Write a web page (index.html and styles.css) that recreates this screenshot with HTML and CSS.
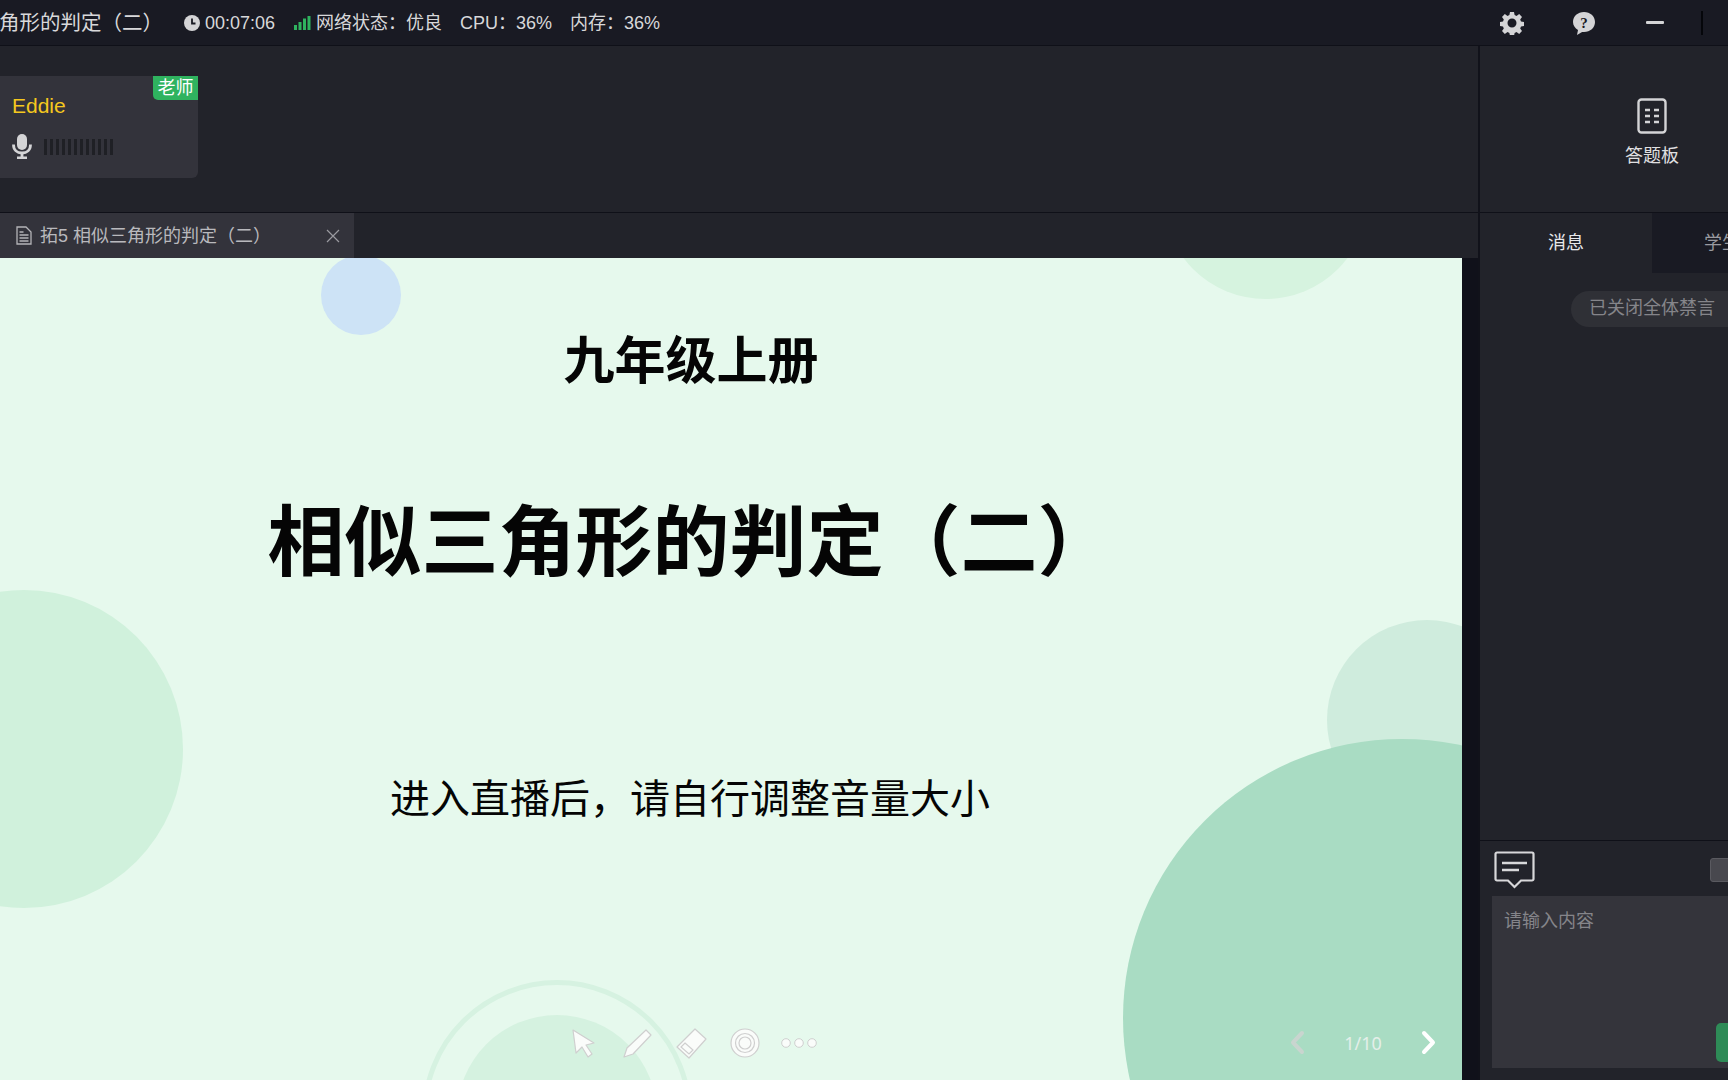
FILE: index.html
```html
<!DOCTYPE html>
<html lang="zh-CN">
<head>
    <meta charset="UTF-8">
    <title>相似三角形的判定（二）</title>
    <link rel="stylesheet" href="styles.css">
</head>
<body>
    <header class="topbar">
        <span class="lesson-title">角形的判定（二）</span>
        <span class="status status-time">
            <svg class="clock" viewBox="0 0 16 16"><circle cx="8" cy="8" r="8" fill="#d4d4d6"/><path d="M8 3.500V8.500H11.500" fill="none" stroke="#191a23" stroke-width="1.800"/></svg>
            00:07:06
        </span>
        <span class="status status-net">
            <svg class="signal" viewBox="0 0 17 14"><path d="M0 9h3v5H0zM4.500 6h3v8h-3zM9 2.500h3V14H9zM13.500 0h3v14h-3z" fill="#2fb35f"/></svg>
            网络状态：优良
        </span>
        <span class="status status-cpu">CPU：36%</span>
        <span class="status status-mem">内存：36%</span>
        <div class="window-tools">
            <svg class="tool-icon" viewBox="0 0 24 24"><path fill="#d4d4d6" fill-rule="evenodd" d="M10 1h4l.6 3.100 1.900.8 2.700-1.800 2.800 2.800-1.800 2.700.8 1.900 3 .5v4l-3 .6-.8 1.900 1.800 2.600-2.800 2.800-2.700-1.800-1.900.8-.6 3.100h-4l-.6-3.100-1.900-.8-2.700 1.800-2.800-2.800 1.800-2.600-.8-1.900-3-.6v-4l3-.5.8-1.900-1.800-2.700 2.800-2.800 2.700 1.800 1.900-.8zM12 7.500a4.500 4.500 0 1 0 0 9 4.500 4.500 0 0 0 0-9z"/></svg>
            <svg class="tool-icon" viewBox="0 0 24 24"><path fill="#d4d4d6" d="M12 1c6.200 0 11 4.300 11 10s-4.800 10-11 10c-.7 0-1.300 0-1.900-.1L5 24l1-5C3 17.200 1 14.300 1 11 1 5.300 5.800 1 12 1z"/><text x="12" y="16.500" class="help-mark">?</text></svg>
            <span class="minimize"></span>
            <span class="tool-sep"></span>
        </div>
    </header>

    <div class="workspace">
        <main class="left-col">
            <section class="video-strip">
                <div class="user-card">
                    <span class="role-badge">老师</span>
                    <div class="user-name">Eddie</div>
                    <div class="user-audio">
                        <svg class="mic" viewBox="0 0 20 25"><rect x="5" y="0" width="10" height="16" rx="5" fill="#d4d4d6"/><path d="M1.500 10.500c0 5.500 3.500 8.500 8.500 8.500s8.500-3 8.500-8.500" fill="none" stroke="#d4d4d6" stroke-width="2.800"/><path d="M10 19v4M5 24h10" stroke="#d4d4d6" stroke-width="2.800"/></svg>
                        <div class="level-bars">
                            <i></i><i></i><i></i><i></i><i></i><i></i><i></i><i></i><i></i><i></i><i></i><i></i>
                        </div>
                    </div>
                </div>
            </section>

            <div class="doc-tabs">
                <div class="doc-tab">
                    <svg class="doc-icon" viewBox="0 0 16 19"><path d="M1 1h9l5 5v12H1zM3.500 9h9M3.500 12h9M3.500 15h9M3.500 6h4" fill="none" stroke="#b4b4b8" stroke-width="1.300"/></svg>
                    <span class="doc-name">拓5 相似三角形的判定（二）</span>
                    <svg class="doc-close" viewBox="0 0 14 14"><path d="M1 1l12 12M13 1L1 13" stroke="#9a9aa0" stroke-width="1.200"/></svg>
                </div>
            </div>

            <div class="stage">
                <div class="slide">
                    <span class="blob blob-blue"></span>
                    <span class="blob blob-top"></span>
                    <span class="blob blob-left"></span>
                    <span class="blob blob-right"></span>
                    <span class="blob blob-big"></span>
                    <span class="blob blob-ring"></span>
                    <span class="blob blob-inner"></span>

                    <div class="slide-text">
                        <h2 class="grade">九年级上册</h2>
                        <h1 class="headline">相似三角形的判定（二）</h1>
                        <p class="note">进入直播后，请自行调整音量大小</p>
                    </div>

                    <div class="slide-tools">
                        <svg class="st-cursor" viewBox="0 0 26 30"><path d="M2 2l21 13-8 2 6 9-4 3-6-10-6 6z" fill="#fafcfa" stroke="#cfcfcf" stroke-width="1.200" stroke-linejoin="round"/></svg>
                        <svg class="st-pen" viewBox="0 0 31 31"><path d="M24 2l5 5L11 26l-9 3 3-9z" fill="#fafcfa" stroke="#cfcfcf" stroke-width="1.200" stroke-linejoin="round"/></svg>
                        <svg class="st-eraser" viewBox="0 0 33 33"><path d="M20 2l11 10-17 19L2 20z" fill="#fafcfa" stroke="#cfcfcf" stroke-width="1.200" stroke-linejoin="round"/><path d="M10 16l8 7-4 4-8-7z" fill="none" stroke="#cfcfcf" stroke-width="1.200"/></svg>
                        <svg class="st-target" viewBox="0 0 30 30"><circle cx="15" cy="15" r="14" fill="#fafcfa" stroke="#cfcfcf" stroke-width="1.200"/><circle cx="15" cy="15" r="9.500" fill="none" stroke="#cfcfcf" stroke-width="1.200"/><circle cx="15" cy="15" r="6" fill="none" stroke="#cfcfcf" stroke-width="1.200"/></svg>
                        <svg class="st-dots" viewBox="0 0 36 10"><circle cx="5" cy="5" r="4.300" fill="#fafcfa" stroke="#cfcfcf"/><circle cx="18" cy="5" r="4.300" fill="#fafcfa" stroke="#cfcfcf"/><circle cx="31" cy="5" r="4.300" fill="#fafcfa" stroke="#cfcfcf"/></svg>
                    </div>

                    <div class="pager">
                        <svg class="chevron" viewBox="0 0 16 25"><path d="M13 3L4 12.500 13 22" fill="none" stroke="#c9d5cf" stroke-width="4" stroke-linecap="round" stroke-linejoin="round"/></svg>
                        <span class="page-num">1/10</span>
                        <svg class="chevron" viewBox="0 0 16 25"><path d="M3 3l9 9.500L3 22" fill="none" stroke="#ffffff" stroke-width="4" stroke-linecap="round" stroke-linejoin="round"/></svg>
                    </div>
                </div>
                <div class="scroll-gutter"></div>
            </div>
        </main>

        <aside class="right-col">
            <section class="answer-panel">
                <svg class="answer-icon" viewBox="0 0 30 36"><rect x="1.500" y="1.500" width="27" height="33" rx="3" fill="none" stroke="#d4d4d6" stroke-width="2.400"/><path d="M8 12h5M17 12h5M8 18h5M17 18h5M8 24h5M17 24h5" stroke="#d4d4d6" stroke-width="2.600"/></svg>
                <span class="answer-label">答题板</span>
            </section>

            <nav class="side-tabs">
                <div class="side-tab active">消息</div>
                <div class="side-tab side-tab-students">学生</div>
            </nav>

            <div class="messages">
                <span class="mute-chip">已关闭全体禁言</span>
            </div>

            <section class="chat-box">
                <div class="chat-head">
                    <svg class="chat-icon" viewBox="0 0 41 38"><path d="M3 1.500h35a1.500 1.500 0 0 1 1.500 1.500v25a1.500 1.500 0 0 1-1.500 1.500H27l-6.500 6.500-6.500-6.500H3A1.500 1.500 0 0 1 1.500 28V3A1.500 1.500 0 0 1 3 1.500z" fill="none" stroke="#d8d8da" stroke-width="2.200"/><path d="M8 12h25M8 19h17" stroke="#d8d8da" stroke-width="2.400"/></svg>
                    <span class="chat-check"></span>
                </div>
                <div class="chat-input">
                    <span class="placeholder">请输入内容</span>
                    <span class="send-btn"></span>
                </div>
            </section>
        </aside>
    </div>
</body>
</html>
```

FILE: styles.css
```css
* {
    box-sizing: border-box;
}

html, body {
    margin: 0;
    padding: 0;
    height: 100%;
}

body {
    width: 1728px;
    height: 1080px;
    overflow: hidden;
    display: flex;
    flex-direction: column;
    background: #22232a;
    color: #d8d8da;
    font-family: "Liberation Sans", "Noto Sans CJK SC", sans-serif;
}

/* top bar */
.topbar {
    height: 46px;
    flex: none;
    display: flex;
    align-items: center;
    background: #191a23;
    border-bottom: 1px solid #0f1018;
    font-size: 18px;
    line-height: 22px;
    white-space: nowrap;
}

.lesson-title {
    font-size: 20.500px;
    margin-left: -1px;
    width: 185px;
}

.status {
    display: flex;
    align-items: center;
}

.clock {
    width: 16px;
    height: 16px;
    margin-right: 5px;
}

.status-time {
    width: 110px;
}

.signal {
    width: 17px;
    height: 14px;
    margin-right: 5px;
}

.status-net {
    width: 166px;
}

.status-cpu {
    width: 110px;
}

.window-tools {
    margin-left: auto;
    display: flex;
    align-items: center;
    height: 100%;
}

.tool-icon {
    width: 24px;
    height: 24px;
    margin-right: 48px;
}

.help-mark {
    font-size: 15px;
    font-weight: bold;
    fill: #191a23;
    text-anchor: middle;
    font-family: "Liberation Serif", serif;
}

.minimize {
    width: 18px;
    height: 3px;
    background: #d4d4d6;
    border-radius: 1px;
    margin-left: 2px;
}

.tool-sep {
    width: 2px;
    height: 24px;
    background: #05060a;
    margin-left: 37px;
    margin-right: 25px;
}

.workspace {
    flex: 1;
    display: flex;
    min-height: 0;
}

.left-col {
    width: 1480px;
    flex: none;
    display: flex;
    flex-direction: column;
    border-right: 2px solid #11121a;
}

/* video strip */
.video-strip {
    height: 167px;
    flex: none;
    padding-top: 30px;
    border-bottom: 1px solid #0f1018;
}

.user-card {
    position: relative;
    width: 198px;
    height: 102px;
    background: #33333b;
    border-radius: 0 0 6px 0;
    padding: 17px 0 0 12px;
}

.role-badge {
    position: absolute;
    top: 0;
    right: 0;
    width: 45px;
    height: 24px;
    background: #2fb35f;
    border-radius: 0 0 0 5px;
    color: #fff;
    font-size: 18px;
    line-height: 25px;
    text-align: center;
}

.user-name {
    font-size: 21px;
    line-height: 26px;
    color: #f5c81e;
}

.user-audio {
    display: flex;
    align-items: center;
    margin-top: 15px;
}

.mic {
    width: 20px;
    height: 25px;
}

.level-bars {
    display: flex;
    gap: 3px;
    margin-left: 12px;
}

.level-bars i {
    width: 3px;
    height: 16px;
    background: #1f2025;
}

/* doc tabs */
.doc-tabs {
    height: 45px;
    flex: none;
    display: flex;
}

.doc-tab {
    width: 354px;
    display: flex;
    align-items: center;
    background: #33333b;
    padding-left: 16px;
}

.doc-icon {
    width: 16px;
    height: 19px;
    margin-right: 8px;
}

.doc-name {
    font-size: 18px;
    line-height: 22px;
    color: #b9b9bd;
    white-space: nowrap;
}

.doc-close {
    width: 14px;
    height: 14px;
    margin-left: auto;
    margin-right: 14px;
}

/* slide */
.stage {
    flex: 1;
    display: flex;
    min-height: 0;
}

.slide {
    position: relative;
    width: 1462px;
    flex: none;
    overflow: hidden;
    background: #e6f9ed;
    color: #050505;
}

.scroll-gutter {
    flex: 1;
    background: #10111a;
}

.blob {
    position: absolute;
    border-radius: 50%;
}

.blob-blue {
    left: 321px;
    top: -3px;
    width: 80px;
    height: 80px;
    background: #cde3f6;
}

.blob-top {
    left: 1163px;
    top: -164px;
    width: 205px;
    height: 205px;
    background: #d6f3df;
}

.blob-left {
    left: -135px;
    top: 332px;
    width: 318px;
    height: 318px;
    background: #d0f1dc;
}

.blob-right {
    left: 1327px;
    top: 362px;
    width: 200px;
    height: 200px;
    background: #cfecdd;
}

.blob-big {
    left: 1123px;
    top: 481px;
    width: 558px;
    height: 558px;
    background: #a9dcc3;
}

.blob-ring {
    left: 422px;
    top: 722px;
    width: 270px;
    height: 270px;
    border: 5px solid #d6f2e1;
}

.blob-inner {
    left: 457px;
    top: 757px;
    width: 200px;
    height: 200px;
    background: #d5f2e0;
}

.slide-text {
    position: relative;
    padding-right: 80px;
    text-align: center;
    white-space: nowrap;
}

.grade {
    margin: 66px 0 0;
    font-size: 51px;
    line-height: 76px;
    font-weight: bold;
}

.headline {
    margin: 88px 0 0;
    font-size: 77px;
    line-height: 110px;
    font-weight: bold;
}

.note {
    margin: 172px 0 0;
    font-size: 40px;
    line-height: 58px;
    padding-right: 2px;
}

.slide-tools {
    position: absolute;
    left: 571px;
    top: 769px;
    display: flex;
    align-items: center;
    height: 32px;
}

.st-cursor {
    width: 26px;
    height: 30px;
}

.st-pen {
    width: 31px;
    height: 31px;
    margin-left: 25px;
}

.st-eraser {
    width: 33px;
    height: 33px;
    margin-left: 22px;
}

.st-target {
    width: 30px;
    height: 30px;
    margin-left: 22px;
}

.st-dots {
    width: 36px;
    height: 10px;
    margin-left: 21px;
}

.pager {
    position: absolute;
    left: 1289px;
    top: 772px;
    width: 148px;
    display: flex;
    align-items: center;
    justify-content: space-between;
}

.chevron {
    width: 16px;
    height: 25px;
}

.page-num {
    font-family: "Noto Sans", sans-serif;
    font-size: 18px;
    color: #e4efe9;
}

/* right column */
.right-col {
    flex: 1;
    min-width: 0;
    display: flex;
    flex-direction: column;
    overflow: hidden;
}

.answer-panel {
    height: 167px;
    width: 344px;
    flex: none;
    display: flex;
    flex-direction: column;
    align-items: center;
    padding-top: 52px;
    border-bottom: 1px solid #0f1018;
}

.answer-icon {
    width: 30px;
    height: 36px;
}

.answer-label {
    font-size: 18px;
    margin-top: 7px;
    color: #e0e0e2;
}

.side-tabs {
    height: 60px;
    flex: none;
    display: flex;
    width: 344px;
}

.side-tab {
    width: 172px;
    background: #191a23;
    font-size: 18px;
    line-height: 60px;
    text-align: center;
    color: #9a9aa0;
}

.side-tab.active {
    background: #22232a;
    color: #e8e8ea;
}

.side-tab-students {
    padding-right: 32px;
}

.messages {
    flex: 1;
    padding-top: 18px;
    padding-left: 91px;
    white-space: nowrap;
}

.mute-chip {
    display: inline-block;
    width: 180px;
    height: 36px;
    border-radius: 18px;
    background: #2f3036;
    padding-left: 18px;
    font-size: 18px;
    line-height: 35px;
    color: #85858a;
}

.chat-box {
    height: 240px;
    flex: none;
    border-top: 1px solid #0f1018;
    padding: 0 0 12px 12px;
    display: flex;
    flex-direction: column;
    width: 260px;
}

.chat-head {
    height: 55px;
    flex: none;
    display: flex;
    align-items: flex-start;
    padding-top: 10px;
}

.chat-icon {
    width: 41px;
    height: 38px;
    margin-left: 2px;
}

.chat-check {
    width: 30px;
    height: 24px;
    margin-left: 175px;
    margin-top: 7px;
    background: #48484e;
    border: 1px solid #5a5a60;
    border-radius: 3px;
}

.chat-input {
    position: relative;
    flex: 1;
    background: #34343b;
    padding: 10px 12px;
}

.placeholder {
    font-size: 18px;
    color: #85858a;
}

.send-btn {
    position: absolute;
    left: 224px;
    bottom: 6px;
    width: 36px;
    height: 39px;
    background: #2e8b57;
    border-radius: 5px;
}
```
